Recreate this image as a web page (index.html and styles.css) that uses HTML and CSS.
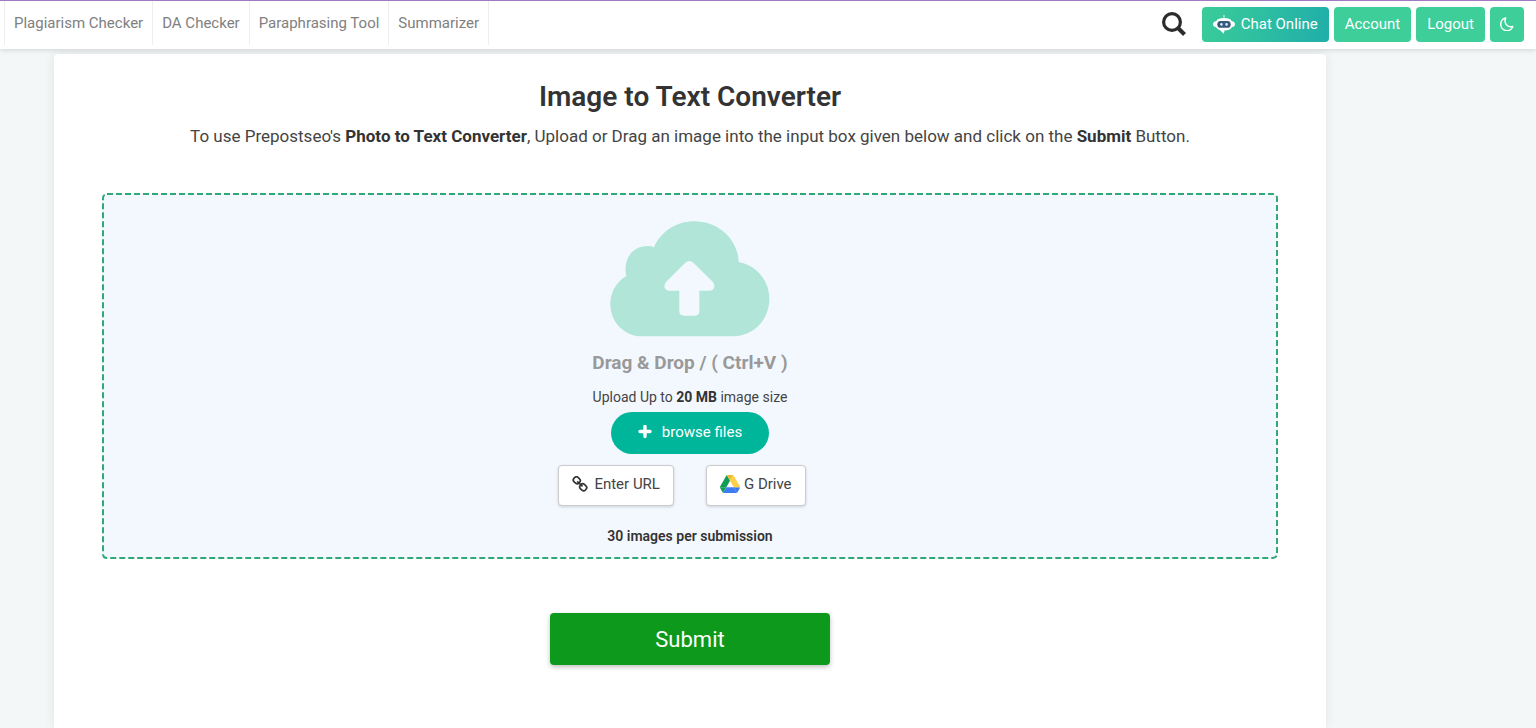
FILE: index.html
```html
<!DOCTYPE html>
<html lang="en">
<head>
<meta charset="utf-8">
<meta name="viewport" content="width=device-width, initial-scale=1">
<title>Image to Text Converter</title>
<link rel="stylesheet" href="styles.css">
</head>
<body>
<header class="topbar">
  <nav class="nav">
    <a class="nav-link" href="#">Plagiarism Checker</a>
    <a class="nav-link" href="#">DA Checker</a>
    <a class="nav-link" href="#">Paraphrasing Tool</a>
    <a class="nav-link" href="#">Summarizer</a>
  </nav>
  <div class="actions">
    <button class="search" type="button" aria-label="Search">
      <svg width="24" height="24" viewBox="0 0 24 24" fill="none" stroke="#2b2b2b"><circle cx="10" cy="10" r="8.4" stroke-width="3.2"/><path d="M16 16l6.500 6.500" stroke-width="4"/></svg>
    </button>
    <a class="pill chat" href="#">
      <svg width="22" height="20" viewBox="0 0 22 20"><path d="M10.400 1h1.200v4h-1.200z" fill="#a5dfd0"/><circle cx="11" cy="2" r="1" fill="#a5dfd0"/><path d="M11 4C15 4 17.800 5 19 7.300C20.800 7.600 22 8.700 22 10.200S20.800 12.800 19 13.100C17.800 15.500 15 16.600 11.500 16.600L10.800 19.800L6.800 16C5 15.500 3.700 14.600 3 13.100C1.200 12.800 0 11.700 0 10.200S1.200 7.600 3 7.300C4.200 5 7 4 11 4Z" fill="#fff"/><rect x="4.300" y="7" width="13.400" height="6.800" rx="3.400" fill="#38597d"/><rect x="7.200" y="9" width="2.500" height="2.800" rx="1.200" fill="#d9ecf5"/><rect x="12.300" y="9" width="2.500" height="2.800" rx="1.200" fill="#d9ecf5"/></svg>
      Chat Online
    </a>
    <a class="pill" href="#">Account</a>
    <a class="pill" href="#">Logout</a>
    <button class="pill moon" type="button" aria-label="Dark mode">
      <svg width="14" height="14" viewBox="0 0 14 14" fill="none" stroke="#fff" stroke-width="1.500" stroke-linejoin="round"><path d="M5.600.9C2.600 1.700.8 4.200.8 7a6.200 6.200 0 0 0 12 2.600C7.700 10.800 3.500 6.700 5.600.9z"/></svg>
    </button>
  </div>
</header>
<main class="page">
  <form class="card">
    <h1 class="title">Image to Text Converter</h1>
    <p class="intro">To use Prepostseo's <strong>Photo to Text Converter</strong>, Upload or Drag an image into the input box given below and click on the <strong>Submit</strong> Button.</p>
    <section class="dropzone">
      <svg class="dash" aria-hidden="true"><rect class="dash-line" x="1" y="1" rx="4"/></svg>
      <svg width="160" height="116" viewBox="59 49 480 348" aria-hidden="true">
        <path d="M155 395C102 395 60 352 60 298C60 262 79 231 108 214C97 166 124 124 172 124Q183 124 191 128C212 80 258 50 313 50C384 50 443 104 445 172C498 181 537 228 537 284C537 345 489 395 428 395Z" fill="#b0e5d7"/>
        <path d="M297 169Q303 169 309 174L368 232Q375 241 371 250Q367 258 359 258H327V320Q327 333 314 333H281Q267 333 267 320V258H235Q227 258 223 250Q220 241 227 232L285 174Q291 169 297 169Z" fill="#f3f8ff"/>
      </svg>
      <h2 class="drag">Drag &amp; Drop / ( Ctrl+V )</h2>
      <p class="limit">Upload Up to <strong>20 MB</strong> image size</p>
      <button class="browse" type="button">
        <svg width="14" height="14" viewBox="0 0 14 14"><path d="M7 1.500v10M2 6.500h10" stroke="#fff" stroke-width="3.400" stroke-linecap="round"/></svg>
        browse files
      </button>
      <div class="sources">
        <button class="source url" type="button">
          <svg width="16" height="16" viewBox="0 0 16 16" fill="none" stroke="#333" stroke-width="1.700"><rect x="1.400" y="1.400" width="6.800" height="5.800" rx="2.400" transform="rotate(42 4.800 4.300)"/><rect x="7.800" y="8.400" width="6.800" height="5.800" rx="2.400" transform="rotate(42 11.200 11.300)"/><path d="M5.200 5.300l5.300 5"/></svg>
          Enter URL
        </button>
        <button class="source" type="button">
          <svg width="20" height="18" viewBox="0 0 87 78"><path d="M6.600 66.850l3.850 6.650c.8 1.400 1.950 2.500 3.300 3.300L27.500 53H0c0 1.550.4 3.100 1.200 4.500z" fill="#0f9d58"/><path d="M43.650 25L29.900 1.200c-1.350.8-2.500 1.900-3.300 3.300L1.200 48.500C.4 49.900 0 51.450 0 53h27.500z" fill="#109b57"/><path d="M73.550 76.800c1.350-.8 2.500-1.900 3.300-3.300l8.100-14c.8-1.400 1.200-4.950 1.200-6.500H59.800z" fill="#3c78e8"/><path d="M43.650 25L57.400 1.200C56.050.4 54.500 0 52.900 0H34.400c-1.600 0-3.150.45-4.500 1.200z" fill="#edb92e"/><path d="M59.800 53H27.500L13.750 76.800c1.350.8 2.900 1.200 4.500 1.200h50.800c1.600 0 3.150-.45 4.500-1.200z" fill="#3d7bf0"/><path d="M73.400 26.500L60.700 4.500c-.8-1.400-1.950-2.500-3.300-3.300L43.650 25 59.800 53h27.450c0-1.550-.4-3.100-1.200-4.500z" fill="#ffcf48"/></svg>
          G Drive
        </button>
      </div>
      <p class="quota">30 images per submission</p>
    </section>
    <button class="submit" type="submit">Submit</button>
  </form>
</main>
</body>
</html>
```
FILE: styles.css
```css
* { box-sizing: border-box; }
body {
  margin: 0;
  min-height: 100vh;
  display: flex;
  flex-direction: column;
  background: #f3f7f8;
  color: #333;
  font-family: Roboto, "Liberation Sans", sans-serif;
  font-size: 15px;
}
h1, h2, p { margin: 0; }
button { font: inherit; cursor: pointer; }
a { text-decoration: none; }
svg { flex: none; }

.topbar {
  display: flex;
  justify-content: space-between;
  height: 49px;
  padding: 0 12px 0 4px;
  background: #fff;
  border-top: 1px solid #9f7cc1;
  box-shadow: 0 1px 5px rgba(0, 0, 0, .14);
  position: relative;
}
.nav {
  display: flex;
  height: 44px;
  border-left: 1px solid #eee;
}
.nav-link {
  padding: 0 9px;
  line-height: 44px;
  color: #808080;
  border-right: 1px solid #eee;
}
.actions {
  display: flex;
  align-items: center;
  gap: 5px;
  padding-bottom: 2px;
}
.search {
  display: flex;
  padding: 0;
  margin-right: 11px;
  border: 0;
  background: none;
}
.pill {
  display: flex;
  align-items: center;
  gap: 6px;
  height: 35px;
  padding: 0 11px 1px;
  border: 0;
  border-radius: 4px;
  background: #3dce9a;
  color: #fff;
}
.chat { background: linear-gradient(100deg, #3acc99, #20aeaa); }
.moon { padding: 0 10px; }

.page {
  flex: 1;
  display: flex;
  padding: 5px 210px 0 54px;
}
.card {
  flex: 1;
  display: flex;
  flex-direction: column;
  align-items: center;
  padding: 24px 48px 62px;
  background: #fff;
  border-radius: 4px 4px 0 0;
  box-shadow: 0 0 12px rgba(0, 0, 0, .08);
}
.title {
  font-size: 28px;
  line-height: 38px;
  font-weight: 600;
}
.intro {
  margin-top: 8px;
  font-size: 17px;
  line-height: 24px;
  text-align: center;
  color: #444;
}
strong { color: #333; }
.dropzone {
  position: relative;
  align-self: stretch;
  display: flex;
  flex-direction: column;
  align-items: center;
  margin-top: 45px;
  padding: 28px 0 13px;
  background: #f3f8ff;
  border-radius: 5px;
}
.dash {
  position: absolute;
  inset: 0;
  width: 100%;
  height: 100%;
  pointer-events: none;
}
.dash-line {
  width: calc(100% - 2px);
  height: calc(100% - 2px);
  fill: none;
  stroke: #30a976;
  stroke-width: 2px;
  stroke-dasharray: 6 3;
}
.drag {
  margin-top: 12px;
  font-size: 19px;
  line-height: 28px;
  color: #999;
}
.limit {
  margin-top: 10px;
  font-size: 14px;
  line-height: 20px;
  color: #444;
}
.browse {
  display: flex;
  align-items: center;
  gap: 10px;
  height: 42px;
  margin-top: 5px;
  padding: 0 27px 2px;
  border: 0;
  border-radius: 21px;
  background: #00b69a;
  color: #fff;
}
.sources {
  display: flex;
  gap: 32px;
  margin: 11px 16px 0 0;
}
.source {
  display: flex;
  align-items: center;
  gap: 4px;
  height: 41px;
  padding: 0 13px 3px;
  border: 1px solid #ccc;
  border-radius: 4px;
  background: #fff;
  box-shadow: 0 1px 3px rgba(0, 0, 0, .16);
  color: #444;
}
.url { gap: 6px; }
.quota {
  margin-top: 20px;
  font-size: 14px;
  line-height: 20px;
  font-weight: 600;
}
.submit {
  width: 280px;
  height: 52px;
  margin-top: 54px;
  border: 0;
  border-radius: 4px;
  background: #0d991c;
  color: #fff;
  font-size: 22px;
  box-shadow: 0 2px 5px rgba(0, 0, 0, .25);
}
```
